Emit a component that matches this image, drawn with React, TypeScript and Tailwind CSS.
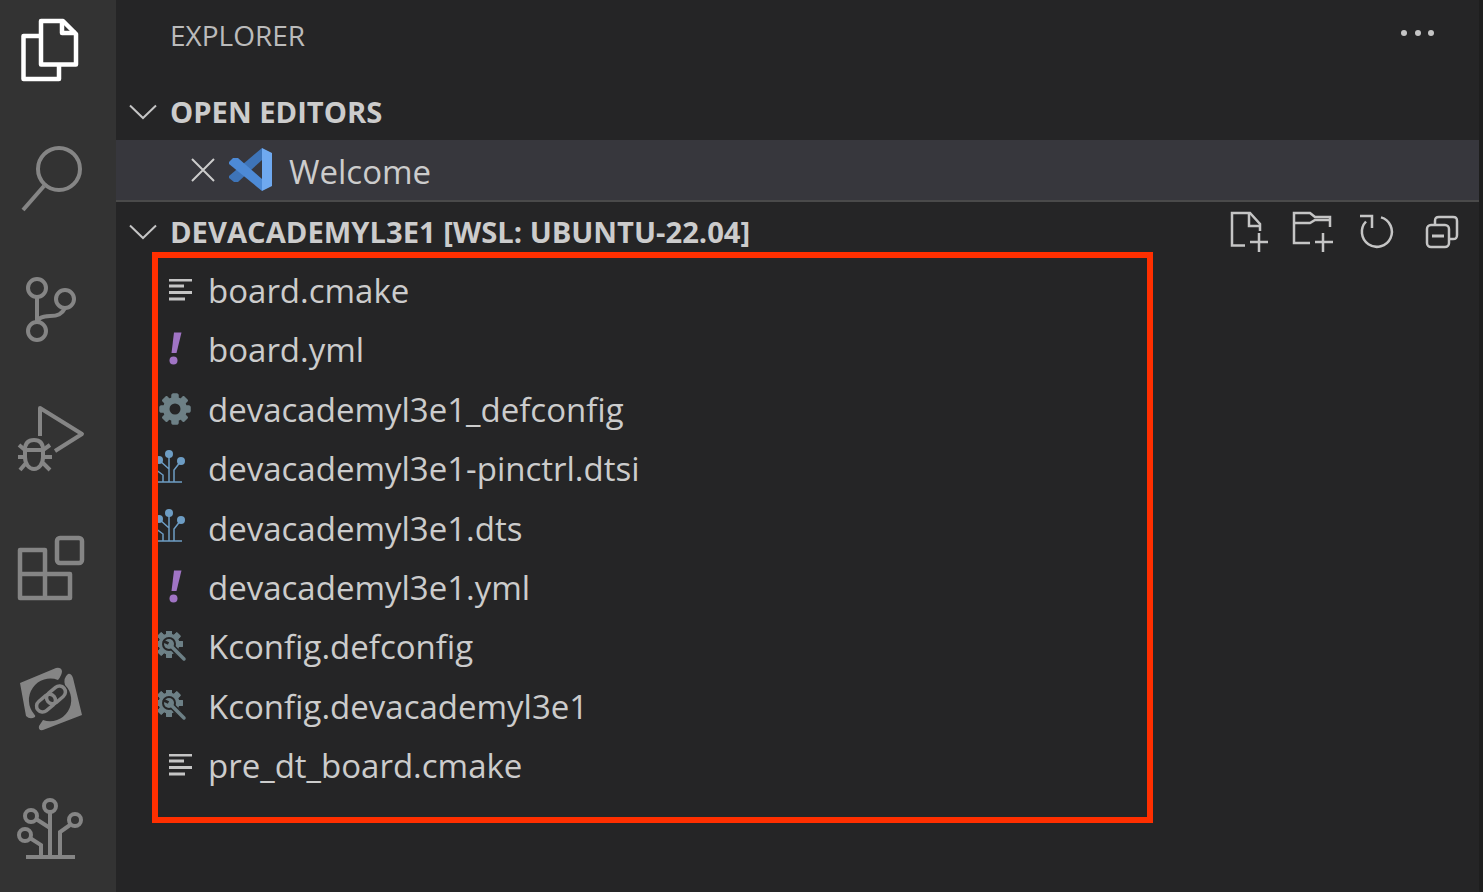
import React from 'react';

const FONT = "font-['Open_Sans','Noto_Sans',sans-serif]";

const barIcon = 'w-[80px] h-[80px] shrink-0';

function FilesIcon() {
  return (
    <svg viewBox="0 -2 80 80" className={barIcon} fill="none" stroke="#ffffff" strokeWidth="4.500" strokeLinejoin="round">
      <path d="M31 11H53L66 24V54.500H31Z" />
      <path d="M52 11V23H66" />
      <path d="M31 26H13.500V69H49V55" />
    </svg>
  );
}

function SearchIcon() {
  return (
    <svg viewBox="0 0 80 80" className={barIcon} fill="none" stroke="#858585" strokeWidth="4">
      <circle cx="49" cy="31" r="21" />
      <path d="M34 48L13 72" />
    </svg>
  );
}

function SourceControlIcon() {
  return (
    <svg viewBox="0 0 80 80" className={barIcon} fill="none" stroke="#858585" strokeWidth="4">
      <circle cx="27" cy="20" r="9" />
      <circle cx="55" cy="31" r="9" />
      <circle cx="27" cy="63" r="9" />
      <path d="M27 29V54" />
      <path d="M27 56C27 50 33 48 40 48C48 48 52 46 55 40" />
    </svg>
  );
}

function DebugIcon() {
  return (
    <svg viewBox="0 0 80 80" className={barIcon} fill="none" stroke="#858585" strokeWidth="4" strokeLinejoin="round">
      <path d="M30 38V10L72 36L45 53" />
      <path d="M15 52H33" />
      <path d="M15 52C15 44 19 42 24 42C29 42 33 44 33 52V59C33 66 29 71 24 71C19 71 15 66 15 59Z" />
      <path d="M9 47L15 52M40 47L33 52M8 59H15M33 59H42M10 72L16 65M40 72L33 65" />
    </svg>
  );
}

function ExtensionsIcon() {
  return (
    <svg viewBox="0 0 80 80" className={barIcon} fill="none" stroke="#858585" strokeWidth="4.500" strokeLinejoin="round">
      <rect x="47" y="10" width="25" height="25" rx="3" />
      <path d="M10 22H35V46H60V70H10Z" />
      <path d="M10 46H35V70" />
    </svg>
  );
}

function ChainIcon() {
  return (
    <svg viewBox="0 -2 80 80" className={barIcon}>
      <path d="M10 23L46 8Q51 7 52 11Q52 15 48 20A21.500 21.500 0 0 0 24 54Q26 56 25 57Q20 60 16 56Z" fill="#858585" />
      <path d="M58 14Q61 13 63 18L72 55L33 70Q28 71 29 66L33 60A21.200 21.200 0 0 0 55 25Q53 18 58 14Z" fill="#858585" />
      <g fill="none" stroke="#858585" strokeWidth="3.500" transform="rotate(-40 41 39)">
        <rect x="24" y="33" width="21" height="12" rx="6" />
        <rect x="37" y="33" width="21" height="12" rx="6" />
      </g>
    </svg>
  );
}

function TreeBarIcon() {
  return (
    <svg viewBox="0 0 80 80" className={barIcon} fill="none" stroke="#858585" strokeWidth="4">
      <circle cx="40" cy="18" r="6" />
      <circle cx="21" cy="28" r="6" />
      <circle cx="65" cy="32" r="6" />
      <circle cx="15" cy="47" r="6" />
      <path d="M16 69H65M40 24V69M50 69V44L60 37M26 31L40 40M20 50L31 57V69" />
    </svg>
  );
}

function TreeFileIcon() {
  return (
    <svg viewBox="0 0 34 40" className="w-[34px] h-10" fill="none" stroke="#6d9dc4" strokeWidth="1.500">
      <circle cx="14" cy="5" r="4" fill="#6d9dc4" stroke="none" />
      <circle cx="26" cy="12" r="4" fill="#6d9dc4" stroke="none" />
      <circle cx="4" cy="11" r="4" fill="#6d9dc4" stroke="none" />
      <path d="M3 33H27M14 5V33M19 33V21L26 12M4 11L14 20M0 20L8 26V33" />
    </svg>
  );
}

function LinesIcon() {
  return (
    <svg viewBox="0 0 24 24" className="w-6 h-6" fill="none" stroke="#c5c5c5" strokeWidth="3">
      <path d="M0 1H23M0 7H15M0 13.400H23M0 20H16" />
    </svg>
  );
}

function YamlIcon() {
  return (
    <svg viewBox="0 0 24 36" className="w-6 h-9">
      <path d="M8 0.500H15.500L10.500 21H5.500Z" fill="#a074c4" />
      <circle cx="7.500" cy="28.500" r="4" fill="#a074c4" />
    </svg>
  );
}

const TEETH = [0, 45, 90, 135, 180, 225, 270, 315];

function GearIcon() {
  return (
    <svg viewBox="0 0 32 32" className="w-8 h-8">
      {TEETH.map(a => (
        <rect key={a} x="12.500" y="0.500" width="7" height="31" rx="1.500" fill="#6d8086" transform={`rotate(${a} 16 16)`} />
      ))}
      <circle cx="16" cy="16" r="12" fill="#6d8086" />
      <circle cx="16" cy="16" r="5.500" fill="#252526" />
    </svg>
  );
}

function KconfigIcon() {
  return (
    <svg viewBox="0 0 32 32" className="w-8 h-8">
      {TEETH.map(a => (
        <rect key={a} x="10" y="-1" width="6" height="28" rx="1" fill="#6d8086" transform={`rotate(${a} 13 13)`} />
      ))}
      <circle cx="13" cy="13" r="10.500" fill="#6d8086" />
      <circle cx="13" cy="13" r="7" fill="#252526" />
      <path d="M15 15L28 28" stroke="#252526" strokeWidth="6.500" />
      <circle cx="13" cy="13" r="5" fill="#6d8086" />
      <path d="M7 10L12.500 12.500" stroke="#252526" strokeWidth="3" />
      <path d="M15 15L28 28" stroke="#6d8086" strokeWidth="3.500" strokeLinecap="round" />
    </svg>
  );
}

function VsCodeIcon() {
  return (
    <svg viewBox="0 0 44 44" className="w-11 h-11 shrink-0">
      <path d="M33 0V12L9 34H5L0 30V28Z" fill="#3e74b8" />
      <path d="M4 10L0 14V16L33 43V31L9 10Z" fill="#4d8ad6" />
      <path d="M33 0L43 5V38L33 43Z" fill="#6fa9f0" />
    </svg>
  );
}

function ChevronIcon() {
  return (
    <svg viewBox="0 0 28 16" className="w-7 h-4 shrink-0" fill="none" stroke="#c5c5c5" strokeWidth="2">
      <path d="M1 1.500L14 14L27 1.500" />
    </svg>
  );
}

function CloseIcon() {
  return (
    <svg viewBox="0 0 24 24" className="w-6 h-6 shrink-0" fill="none" stroke="#cccccc" strokeWidth="2">
      <path d="M1 1L23 23M23 1L1 23" />
    </svg>
  );
}

function NewFileIcon() {
  return (
    <svg viewBox="0 0 40 42" className="w-10 h-[42px]" fill="none" stroke="#c5c5c5" strokeWidth="2.500">
      <path d="M15 34.500H2V2H20L30 13V20" />
      <path d="M19 2V15H30" />
      <path d="M29 22V41M20 31H38" />
    </svg>
  );
}

function NewFolderIcon() {
  return (
    <svg viewBox="0 0 42 42" className="w-[42px] h-[42px]" fill="none" stroke="#c5c5c5" strokeWidth="2.500">
      <path d="M18 32H2V2H18L23 6H38V16" />
      <path d="M2 12H18L23 9H38" />
      <path d="M31 22V41M23 31H41" />
    </svg>
  );
}

function RefreshIcon() {
  return (
    <svg viewBox="0 0 36 36" className="w-9 h-9" fill="none" stroke="#c5c5c5" strokeWidth="2.500">
      <path d="M22 3.400A15 15 0 1 1 7 7.500" />
      <path d="M1 2H13V14" />
    </svg>
  );
}

function CollapseIcon() {
  return (
    <svg viewBox="0 0 34 34" className="w-[34px] h-[34px]" fill="none" stroke="#c5c5c5" strokeWidth="2.500" strokeLinejoin="round">
      <rect x="2" y="10" width="22" height="22" rx="4" />
      <path d="M10 10V6C10 3 11 2 14 2H28C31 2 32 3 32 6V20C32 23 31 24 28 24H24" />
      <path d="M7 21H19" strokeWidth="3" />
    </svg>
  );
}

const files: { name: string; icon: React.ReactNode; left: string }[] = [
  { name: 'board.cmake', icon: <LinesIcon />, left: 'pl-[53px]' },
  { name: 'board.yml', icon: <YamlIcon />, left: 'pl-[50px]' },
  { name: 'devacademyl3e1_defconfig', icon: <GearIcon />, left: 'pl-[43px]' },
  { name: 'devacademyl3e1-pinctrl.dtsi', icon: <TreeFileIcon />, left: 'pl-[39px]' },
  { name: 'devacademyl3e1.dts', icon: <TreeFileIcon />, left: 'pl-[39px]' },
  { name: 'devacademyl3e1.yml', icon: <YamlIcon />, left: 'pl-[50px]' },
  { name: 'Kconfig.defconfig', icon: <KconfigIcon />, left: 'pl-[40px]' },
  { name: 'Kconfig.devacademyl3e1', icon: <KconfigIcon />, left: 'pl-[40px]' },
  { name: 'pre_dt_board.cmake', icon: <LinesIcon />, left: 'pl-[53px]' },
];

function SectionHeader({ title, children }: { title: string; children?: React.ReactNode }) {
  return (
    <div className="flex items-center h-full pl-[13px] pr-[20px]">
      <ChevronIcon />
      <span className="ml-[13px] pt-[2px] text-[29.200px] font-bold text-[#cccccc] whitespace-nowrap">{title}</span>
      {children}
    </div>
  );
}

export default function App() {
  return (
    <div className={`relative flex w-[1483px] h-[892px] overflow-hidden bg-[#1e1e1e] ${FONT}`}>
      <div className="flex flex-col w-[116px] shrink-0 bg-[#333333] pl-[10px] pt-[8px] gap-[50px]">
        <FilesIcon />
        <SearchIcon />
        <SourceControlIcon />
        <DebugIcon />
        <ExtensionsIcon />
        <ChainIcon />
        <TreeBarIcon />
      </div>

      <div className="flex flex-col w-[1363px] bg-[#252526]">
        <div className="flex items-center justify-between h-[72px] pl-[54px] pr-[45px] pb-[2px] shrink-0">
          <span className="text-[28px] text-[#bbbbbb]">EXPLORER</span>
          <div className="flex gap-[7.500px] mb-[4px]">
            <span className="w-[6px] h-[6px] rounded-full bg-[#c5c5c5]" />
            <span className="w-[6px] h-[6px] rounded-full bg-[#c5c5c5]" />
            <span className="w-[6px] h-[6px] rounded-full bg-[#c5c5c5]" />
          </div>
        </div>

        <div className="h-[68px] pt-[12px] shrink-0">
          <SectionHeader title="OPEN EDITORS" />
        </div>

        <div className="flex items-center h-[60px] bg-[#37373d] pl-[75px] shrink-0">
          <CloseIcon />
          <div className="ml-[14px]"><VsCodeIcon /></div>
          <span className="ml-[16px] pt-[3px] text-[33px] text-[#cccccc]">Welcome</span>
        </div>
        <div className="h-[2px] bg-[#4a4a4a] shrink-0" />

        <div className="h-[59px] shrink-0">
          <SectionHeader title="DEVACADEMYL3E1 [WSL: UBUNTU-22.04]">
            <div className="ml-auto flex items-center">
              <NewFileIcon />
              <div className="ml-[22px]"><NewFolderIcon /></div>
              <div className="ml-[25px]"><RefreshIcon /></div>
              <div className="ml-[30px]"><CollapseIcon /></div>
            </div>
          </SectionHeader>
        </div>

        <div className="flex flex-col">
          {files.map(f => (
            <div key={f.name} className="flex items-center h-[59.400px]">
              <div className={`flex items-center w-[92px] shrink-0 ${f.left}`}>{f.icon}</div>
              <span className="text-[33px] text-[#cccccc] whitespace-nowrap">{f.name}</span>
            </div>
          ))}
        </div>
      </div>

      <div className="absolute left-[152px] top-[252px] w-[1001px] h-[571px] border-[6px] border-[#ff2f00] pointer-events-none" />
    </div>
  );
}
